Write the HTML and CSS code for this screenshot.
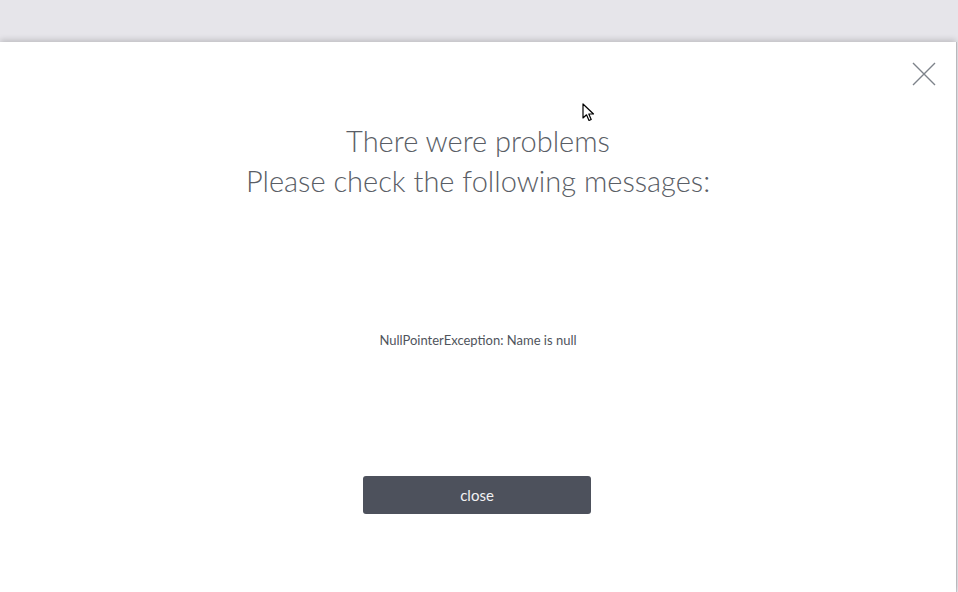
FILE: index.html
```html
<!DOCTYPE html>
<html>
<head>
<meta charset="utf-8">
<link rel="stylesheet" href="styles.css">
</head>
<body>
<div class="backdrop"></div>
<div class="modal">
  <button class="close-x" aria-label="close">
    <svg width="24" height="24" viewBox="0 0 24 24"><path d="M1 1 L23 23 M23 1 L1 23" stroke="#7d838a" stroke-width="1.4" fill="none"/></svg>
  </button>
  <h1 class="title">There were problems<br>Please check the following messages:</h1>
  <p class="message">NullPointerException: Name is null</p>
  <button class="close-btn">close</button>
</div>
<svg class="cursor" width="14" height="20" viewBox="0 0 14 20"><path d="M1 1 L1 15 L4.5 11.8 L7 17.5 L9.2 16.5 L6.8 11 L11.5 11 Z" fill="#fff" stroke="#000" stroke-width="1.2" stroke-linejoin="round"/></svg>
</body>
</html>
```
FILE: styles.css
```css
html, body {
  margin: 0;
  padding: 0;
  height: 100%;
  overflow: hidden;
}
body {
  background: #e6e5ea;
  font-family: "Source Sans Pro", "Lato", "Open Sans", sans-serif;
  display: flex;
  flex-direction: column;
}
.backdrop {
  height: 42px;
  flex: none;
}
.modal {
  flex: 1;
  background: #fff;
  margin-right: 2px;
  box-shadow: 0 -2px 6px rgba(0,0,0,0.18), 1px 0 0 #c9c8cd;
  position: relative;
  display: flex;
  flex-direction: column;
  align-items: center;
}
.close-x {
  position: absolute;
  top: 20px;
  right: 20px;
  background: none;
  border: 0;
  padding: 0;
  width: 24px;
  height: 24px;
}
.title {
  margin: 79px 0 0;
  font-weight: 300;
  font-size: 29px;
  line-height: 40px;
  color: #5a5e66;
  text-align: center;
}
.message {
  margin: 130px 0 0;
  font-size: 13px;
  line-height: 18px;
  color: #50545c;
}
.close-btn {
  margin-top: 127px;
  margin-right: 2px;
  width: 228px;
  height: 38px;
  background: #4d515c;
  color: #f2f2f4;
  border: 0;
  border-radius: 3px;
  font-family: inherit;
  font-size: 15px;
}
.cursor {
  position: absolute;
  left: 582px;
  top: 103px;
}
```
